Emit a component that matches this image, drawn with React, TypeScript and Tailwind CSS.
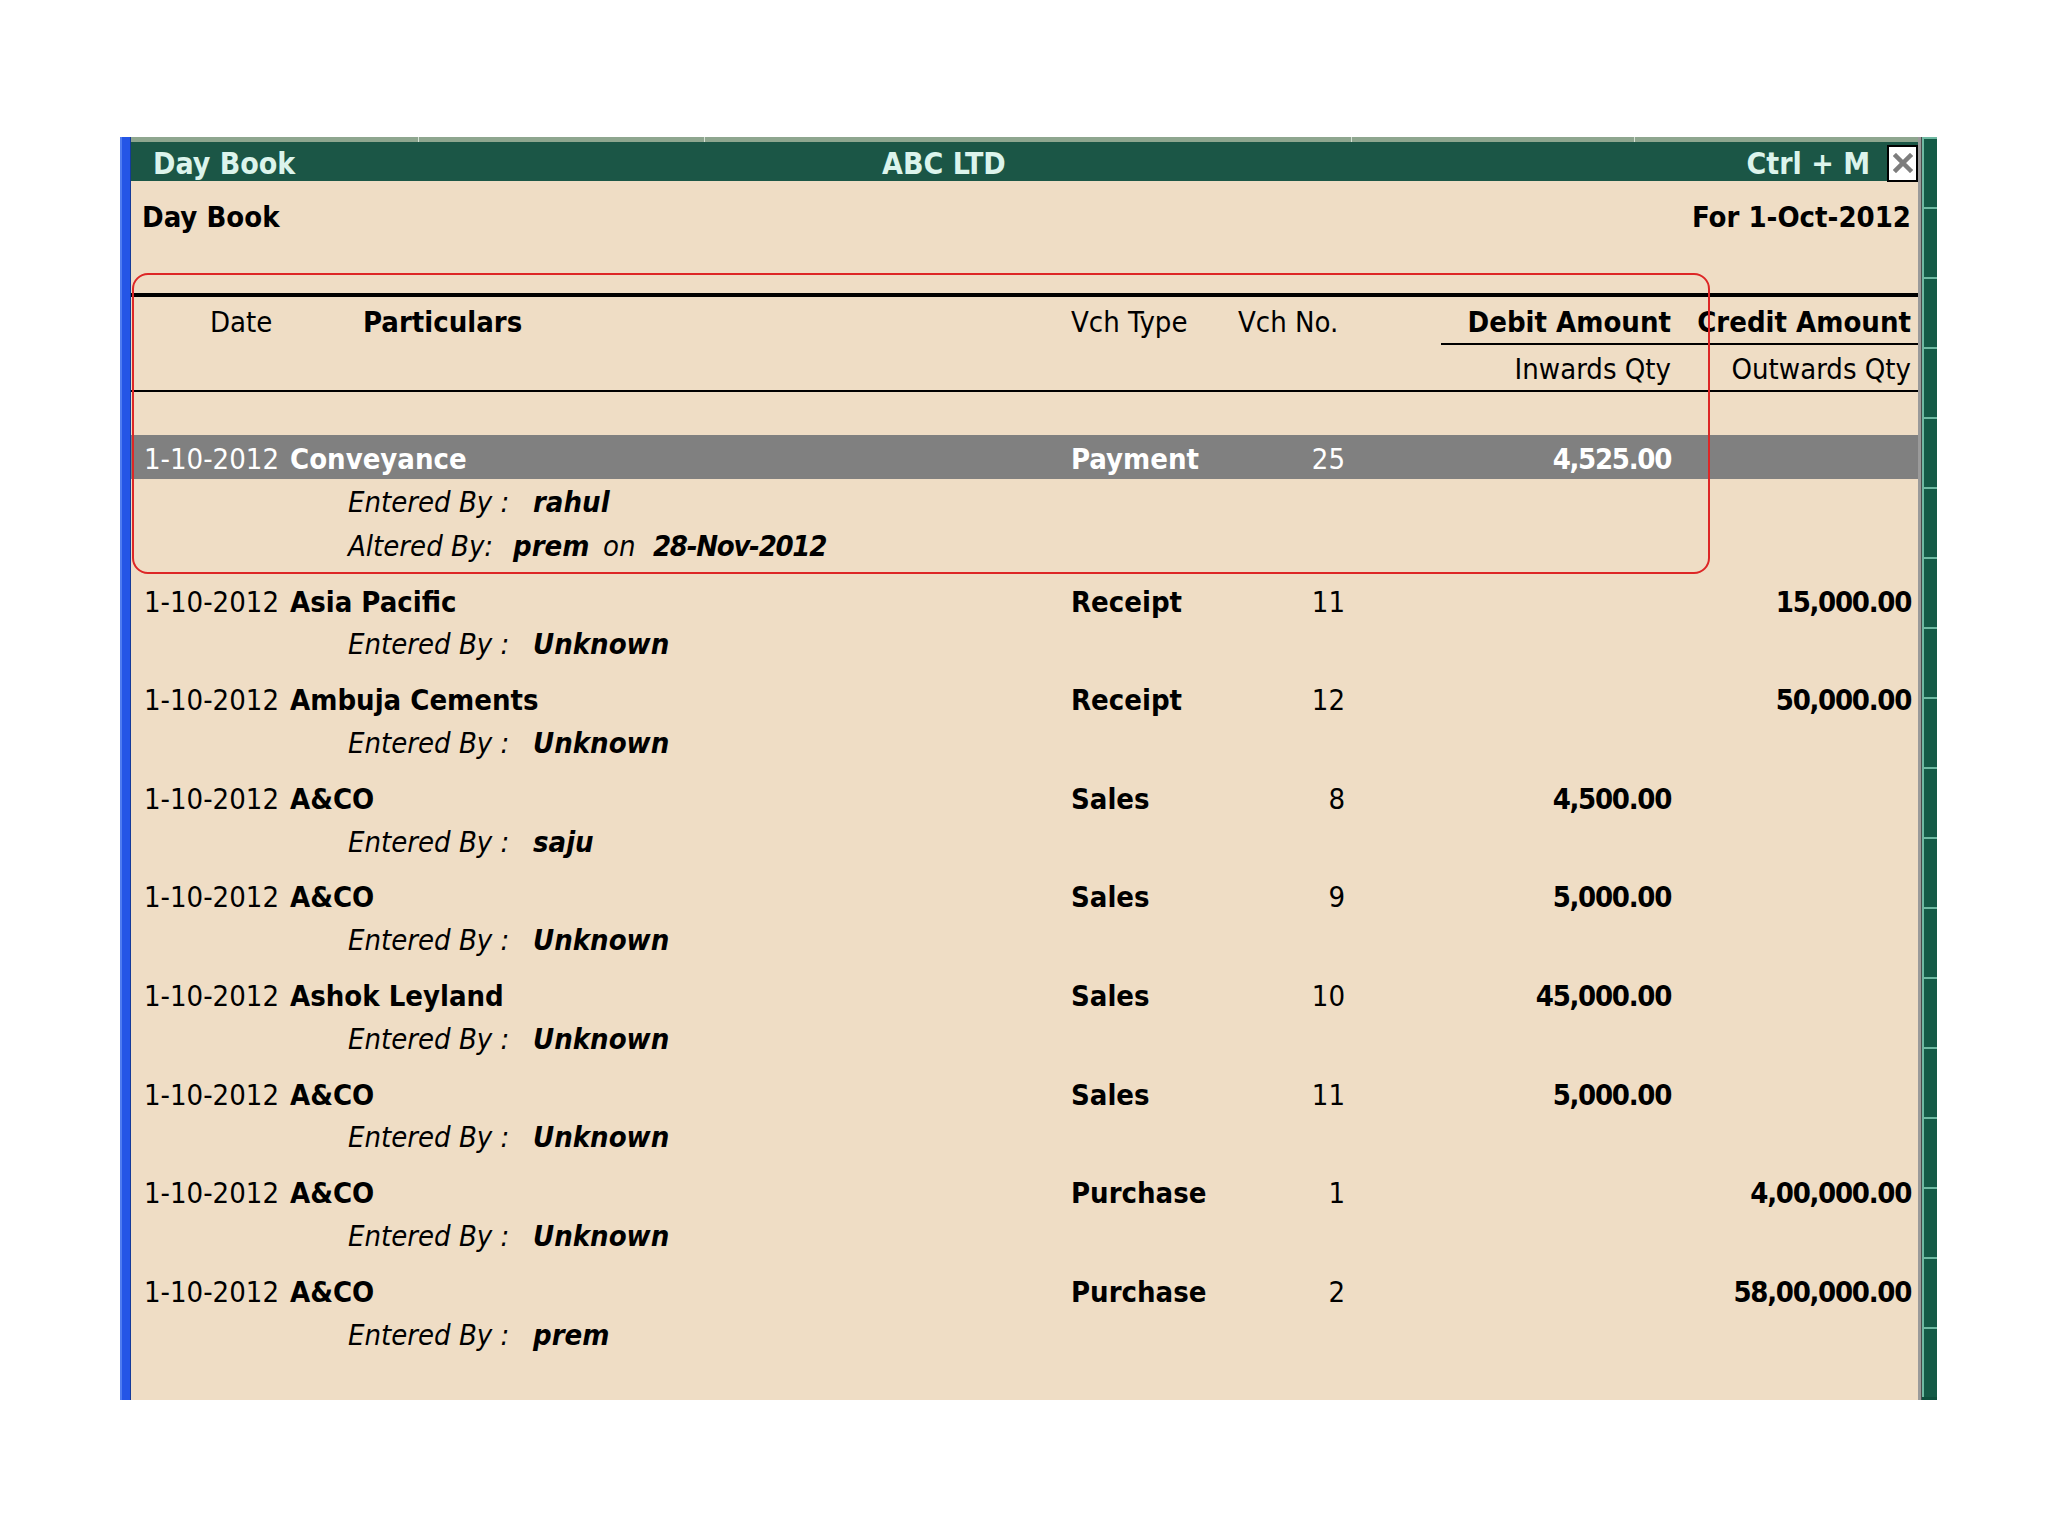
import React from "react";

type Entry = {
  date: string;
  party: string;
  type: string;
  no: string;
  debit?: string;
  credit?: string;
  by: string;
  altered?: { by: string; on: string };
  selected?: boolean;
};

const entries: Entry[] = [
  { date: "1-10-2012", party: "Conveyance", type: "Payment", no: "25", debit: "4,525.00", by: "rahul", altered: { by: "prem", on: "28-Nov-2012" }, selected: true },
  { date: "1-10-2012", party: "Asia Pacific", type: "Receipt", no: "11", credit: "15,000.00", by: "Unknown" },
  { date: "1-10-2012", party: "Ambuja Cements", type: "Receipt", no: "12", credit: "50,000.00", by: "Unknown" },
  { date: "1-10-2012", party: "A&CO", type: "Sales", no: "8", debit: "4,500.00", by: "saju" },
  { date: "1-10-2012", party: "A&CO", type: "Sales", no: "9", debit: "5,000.00", by: "Unknown" },
  { date: "1-10-2012", party: "Ashok Leyland", type: "Sales", no: "10", debit: "45,000.00", by: "Unknown" },
  { date: "1-10-2012", party: "A&CO", type: "Sales", no: "11", debit: "5,000.00", by: "Unknown" },
  { date: "1-10-2012", party: "A&CO", type: "Purchase", no: "1", credit: "4,00,000.00", by: "Unknown" },
  { date: "1-10-2012", party: "A&CO", type: "Purchase", no: "2", credit: "58,00,000.00", by: "prem" },
];

// same column grid for header and rows (main column starts at x=131)
const cols = "grid grid-cols-[13px_146px_781px_167px_107px_326px_240px_7px]";

const EntryRow = ({ e }: { e: Entry }) => (
  <div className="pb-[10.6px]">
    <div className={`${cols} h-[44px] pt-[3px] items-center ${e.selected ? "bg-[#808080] text-white" : "text-black"}`}>
      <div />
      <div>{e.date}</div>
      <div className="font-bold">{e.party}</div>
      <div className="font-bold">{e.type}</div>
      <div className="text-right">{e.no}</div>
      <div className="text-right font-bold tracking-[-1.3px]">{e.debit}</div>
      <div className="text-right font-bold tracking-[-1.3px]">{e.credit}</div>
      <div />
    </div>
    <div className="h-[44px] pt-[3px] flex items-center pl-[217px] italic">
      <span className="inline-block w-[185px]">Entered By :</span>
      <span className="font-bold">{e.by}</span>
    </div>
    {e.altered && (
      <div className="h-[44px] pt-[3px] flex items-center pl-[217px] italic">
        <span className="inline-block w-[165px]">Altered By:</span>
        <span className="inline-block w-[90px] font-bold">{e.altered.by}</span>
        <span className="inline-block w-[50px]">on</span>
        <span className="font-bold tracking-[-1.3px]">{e.altered.on}</span>
      </div>
    )}
  </div>
);

const CloseBox = () => (
  <div className="ml-[17px] w-[31px] h-[37px] border-2 border-black bg-white flex items-center justify-center">
    <svg width="20" height="20" viewBox="0 0 20 20">
      <path d="M3 3 L17 17 M17 3 L3 17" stroke="#7d7d7d" strokeWidth="4.5" strokeLinecap="square" />
    </svg>
  </div>
);

export default function App() {
  return (
    <div className="min-h-screen bg-white pt-[137px] pl-[120px] font-['DejaVu_Sans_Condensed','DejaVu_Sans',sans-serif] font-stretch-condensed text-[29px] text-black">
      <div className="flex w-[1817px] h-[1263px]">
        {/* left blue edge */}
        <div className="w-[11px] bg-[#2455e6] border-l-2 border-l-[#4f7cf0] border-r border-r-[#143a9a]" />

        {/* main column */}
        <div className="relative w-[1787px] flex flex-col bg-[#efddc5]">
          <div className="h-[5px] flex bg-[#8ea68f]">
            <div className="w-[288px] border-r border-[#d6e2d6]" />
            <div className="w-[286px] border-r border-[#d6e2d6]" />
            <div className="w-[647px] border-r border-[#d6e2d6]" />
            <div className="w-[283px] border-r border-[#d6e2d6]" />
          </div>

          <div className="h-[39px] pt-[3px] flex items-center pl-[22px] bg-[#1b5646] text-[#dcf4ec] text-[30px] font-bold">
            <span className="w-[729px]">Day Book</span>
            <span>ABC LTD</span>
            <span className="ml-auto">Ctrl + M</span>
            <CloseBox />
          </div>

          <div className="pt-[16px] h-[58px] flex items-center justify-between pl-[11px] pr-[7px] font-bold">
            <span>Day Book</span>
            <span>For 1-Oct-2012</span>
          </div>

          <div className="mt-[54px] border-t-4 border-black border-b-2">
            <div className={`${cols} grid-rows-[46px_2px_45px] items-center`}>
              <div />
              <div className="pl-[66px] pt-[5px]">Date</div>
              <div className="pl-[73px] pt-[5px] font-bold">Particulars</div>
              <div className="pt-[5px]">Vch Type</div>
              <div className="pt-[5px]">Vch No.</div>
              <div className="text-right pt-[5px] font-bold">Debit Amount</div>
              <div className="text-right pt-[5px] font-bold whitespace-nowrap">Credit Amount</div>
              <div />

              <div className="col-start-6 col-end-9 ml-[96px] h-[2px] bg-black" />

              <div className="col-start-6 text-right pt-[4px]">Inwards Qty</div>
              <div className="col-start-7 text-right pt-[4px]">Outwards Qty</div>
            </div>
          </div>

          <div className="h-[43px]" />

          {entries.map((e, i) => (
            <EntryRow key={i} e={e} />
          ))}

          {/* red highlight drawn over the screenshot */}
          <div className="pointer-events-none absolute left-[1px] top-[136px] w-[1578px] h-[301px] rounded-[16px] border-2 border-[#dd2626]" />
        </div>

        {/* right edge: gray rule + green button strip */}
        <div className="w-[4px] bg-[#9a9a9a] border-r border-[#4a4a4a]" />
        <div className="w-[15px] flex flex-col bg-[#0f4f3d]">
          {Array.from({ length: 18 }).map((_, i) => (
            <div key={i} className="h-[70px] shrink-0 border-t-2 border-l-2 border-t-[#6fb9a2] border-l-[#6fb9a2] bg-[#145a46]" />
          ))}
        </div>
      </div>
    </div>
  );
}
